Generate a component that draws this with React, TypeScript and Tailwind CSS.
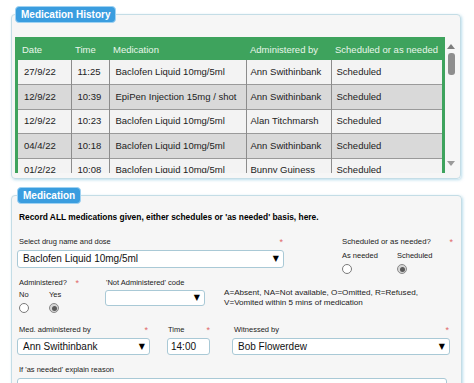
import React from "react";

const history = [
  { date: "27/9/22", time: "11:25", med: "Baclofen Liquid 10mg/5ml", by: "Ann Swithinbank", kind: "Scheduled" },
  { date: "12/9/22", time: "10:39", med: "EpiPen Injection 15mg / shot", by: "Ann Swithinbank", kind: "Scheduled" },
  { date: "12/9/22", time: "10:23", med: "Baclofen Liquid 10mg/5ml", by: "Alan Titchmarsh", kind: "Scheduled" },
  { date: "04/4/22", time: "10:18", med: "Baclofen Liquid 10mg/5ml", by: "Ann Swithinbank", kind: "Scheduled" },
  { date: "01/2/22", time: "10:08", med: "Baclofen Liquid 10mg/5ml", by: "Bunny Guiness", kind: "Scheduled" },
];

function Star() {
  return <span className="text-[9px] leading-[10px] text-[#e06868]">*</span>;
}

function Radio({ checked }: { checked?: boolean }) {
  return checked ? (
    <span className="flex h-[10px] w-[10px] items-center justify-center rounded-full border border-[#8a8a8a] bg-[#d6d6d6]">
      <span className="h-[5px] w-[5px] rounded-full bg-[#5a5a5a]" />
    </span>
  ) : (
    <span className="block h-[10px] w-[10px] rounded-full border border-[#7a7a7a] bg-white" />
  );
}

function Select({ value, className }: { value?: string; className: string }) {
  return (
    <div
      className={`flex items-center justify-between rounded-[3px] border border-[#a9c9d6] bg-white pl-[5px] pr-[4px] text-[10px] text-[#111] ${className}`}
    >
      <span>{value}</span>
      <span className="font-['DejaVu_Sans',sans-serif] text-[8px] text-black">▼</span>
    </div>
  );
}

function Badge({ children }: { children: React.ReactNode }) {
  return (
    <legend className="rounded-[4px] border border-[#9fd2f2] bg-[#3a9ddf] px-[5px] text-[10px] font-bold leading-[15px] text-white">
      {children}
    </legend>
  );
}

export default function App() {
  return (
    <div className="min-h-screen bg-white pt-[6px] font-['Liberation_Sans',Arial,sans-serif] text-[#222]">
      {/* medication history */}
      <fieldset className="ml-[11px] w-[450px] rounded-[4px] border border-[#c4dde6] bg-[#f6f6f6] pb-[5px] pl-[3px] pr-[3px] pt-[14px] shadow-[1px_1px_3px_rgba(140,200,225,0.6)]">
        <Badge>Medication History</Badge>
        <div className="flex h-[136px]">
          <div className="w-[430px] overflow-hidden border-x-[3px] border-[#3ea35d] bg-[#3ea35d]">
            <table className="w-full table-fixed border-collapse text-left">
              <colgroup>
                <col className="w-[53px]" />
                <col className="w-[38px]" />
                <col className="w-[137px]" />
                <col className="w-[85px]" />
                <col />
              </colgroup>
              <thead>
                <tr className="h-[23px] whitespace-nowrap text-[9.5px] text-[#e9f6ea]">
                  <th className="pl-[4px] pt-[4px] font-normal">Date</th>
                  <th className="pl-[4px] pt-[4px] font-normal">Time</th>
                  <th className="pl-[4px] pt-[4px] font-normal">Medication</th>
                  <th className="pl-[4px] pt-[4px] font-normal">Administered by</th>
                  <th className="pl-[4px] pt-[4px] font-normal">Scheduled or as needed</th>
                </tr>
              </thead>
              <tbody className="text-[9.5px] text-[#222]">
                {history.map((r, i) => (
                  <tr
                    key={i}
                    className={`h-[24.5px] whitespace-nowrap border-b border-[#9a9a9a] ${i % 2 ? "bg-[#d9d9d9]" : "bg-[#f3f3f3]"}`}
                  >
                    <td className="pl-[6px]">{r.date}</td>
                    <td className="border-l border-[#8c8c8c] pl-[6px]">{r.time}</td>
                    <td className="border-l border-[#8c8c8c] pl-[6px]">{r.med}</td>
                    <td className="border-l border-[#8c8c8c] pl-[4px]">{r.by}</td>
                    <td className="border-l border-[#8c8c8c] pl-[5px]">{r.kind}</td>
                  </tr>
                ))}
              </tbody>
            </table>
          </div>
          <div className="flex w-[12px] flex-col items-center">
            <span className="mt-[7px] h-0 w-0 border-x-[4px] border-b-[5px] border-x-transparent border-b-[#7d7d7d]" />
            <span className="mt-[4px] h-[22px] w-[7px] rounded-[3px] bg-[#8e8e8e]" />
            <span className="mt-auto mb-[7px] h-0 w-0 border-x-[4px] border-t-[5px] border-x-transparent border-t-[#9a9a9a]" />
          </div>
        </div>
      </fieldset>

      {/* medication form */}
      <fieldset className="ml-[11px] mt-[8px] w-[450px] rounded-[4px] border border-[#c4dde6] bg-[#f6f6f6] pb-[10px] pl-[5px] pr-[8px] pt-[8px] shadow-[1px_1px_3px_rgba(140,200,225,0.6)]">
        <Badge>Medication</Badge>
        <p className="pl-[2px] text-[8.4px] font-bold leading-[10px] text-black">
          Record ALL medications given, either schedules or 'as needed' basis, here.
        </p>

        {/* drug + scheduled */}
        <div className="mt-[15px] flex h-[31px] text-[7.5px] leading-[10px] text-[#222]">
          <div className="w-[267px]">
            <div className="flex justify-between pl-[2px] pr-[1px]">
              <span>Select drug name and dose</span>
              <Star />
            </div>
            <Select value="Baclofen Liquid 10mg/5ml" className="mt-[3px] h-[18px]" />
          </div>
          <div className="ml-[58px] w-[111px]">
            <div className="flex justify-between">
              <span className="text-[7.8px]">Scheduled or as needed?</span>
              <Star />
            </div>
            <div className="mt-[4px] flex gap-[18px]">
              <div className="w-[37px]">
                <div>As needed</div>
                <div className="mt-[3px]">
                  <Radio />
                </div>
              </div>
              <div>
                <div>Scheduled</div>
                <div className="mt-[3px]">
                  <Radio checked />
                </div>
              </div>
            </div>
          </div>
        </div>

        {/* administered */}
        <div className="mt-[10px] flex h-[35px] text-[7.5px] leading-[10px] text-[#222]">
          <div className="w-[63px] pl-[2px]">
            <div className="flex w-[60px] justify-between">
              <span>Administered?</span>
              <Star />
            </div>
            <div className="mt-[2px] flex gap-[20px]">
              <div>
                <div>No</div>
                <div className="mt-[3px]">
                  <Radio />
                </div>
              </div>
              <div>
                <div>Yes</div>
                <div className="mt-[3px]">
                  <Radio checked />
                </div>
              </div>
            </div>
          </div>
          <div className="ml-[25px] w-[100px]">
            <div className="pl-[1px]">'Not Administered' code</div>
            <Select className="mt-[2px] h-[16px]" />
          </div>
          <div className="ml-[19px] pt-[10px] text-[8.1px]">
            <div>A=Absent, NA=Not available, O=Omitted, R=Refused,</div>
            <div>V=Vomited within 5 mins of medication</div>
          </div>
        </div>

        {/* who / time / witness */}
        <div className="mt-[12px] flex text-[7.5px] leading-[10px] text-[#222]">
          <div className="w-[133px]">
            <div className="flex justify-between pl-[2px] pr-[2px]">
              <span>Med. administered by</span>
              <Star />
            </div>
            <Select value="Ann Swithinbank" className="mt-[3px] h-[17px]" />
          </div>
          <div className="ml-[17px] w-[43px]">
            <div className="flex justify-between pl-[1px]">
              <span>Time</span>
              <Star />
            </div>
            <div className="mt-[3px] flex h-[17px] items-center rounded-[3px] border border-[#a9c9d6] bg-white pl-[3px] text-[10px] text-[#111]">
              14:00
            </div>
          </div>
          <div className="ml-[22px] w-[218px]">
            <div className="flex justify-between pl-[2px] pr-[1px]">
              <span>Witnessed by</span>
              <Star />
            </div>
            <Select value="Bob Flowerdew" className="mt-[3px] h-[17px]" />
          </div>
        </div>

        <div className="mt-[10px] pl-[2px] text-[7.5px] leading-[10px] text-[#222]">If 'as needed' explain reason</div>
        <div className="mt-[3px] h-[40px] w-[430px] rounded-[3px] border border-[#a9c9d6] bg-white" />
      </fieldset>
    </div>
  );
}
